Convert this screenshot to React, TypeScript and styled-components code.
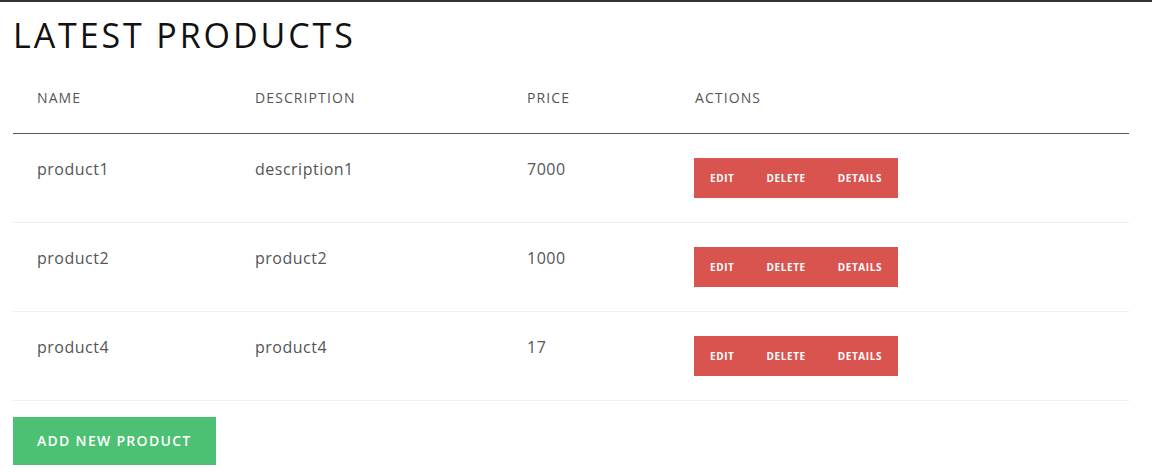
import React from "react";
import styled, { createGlobalStyle } from "styled-components";

const Global = createGlobalStyle`
  html, body { margin: 0; padding: 0; background: #fff; }
  body {
    font-family: "Open Sans", "Noto Sans", sans-serif;
    border-top: 2px solid #333;
  }
`;

const Page = styled.main`
  padding: 0 23px 0 13px;
`;

const Title = styled.h1`
  margin: 13px 0 0 0;
  font-size: 34px;
  font-weight: 400;
  line-height: 1.2;
  letter-spacing: 2.9px;
  color: #111;
  text-transform: uppercase;
`;

const Table = styled.table`
  width: 100%;
  border-collapse: collapse;
  table-layout: fixed;
  margin-top: 5px;
`;

const HeadCell = styled.th<{ $w?: number }>`
  width: ${(p) => (p.$w ? `${p.$w}px` : "auto")};
  padding: 25px 24px 23px;
  text-align: left;
  font-size: 14px;
  font-weight: 400;
  letter-spacing: 1.1px;
  line-height: 24px;
  color: #555;
  text-transform: uppercase;
  border-bottom: 1px solid #555;
`;

const Row = styled.tr`
  border-bottom: 1px solid #eee;
`;

const Cell = styled.td`
  padding: 24px;
  vertical-align: top;
  font-size: 16px;
  line-height: 22px;
  letter-spacing: 0.5px;
  color: #555;
`;

const ActionGroup = styled.div`
  display: flex;
  margin-left: -1px;
`;

const ActionButton = styled.button`
  height: 40px;
  padding: 0 16px;
  border: none;
  background: #d9534f;
  color: #fff;
  font-family: "Open Sans", sans-serif;
  font-size: 10px;
  font-weight: 700;
  letter-spacing: 0.6px;
  text-transform: uppercase;
  cursor: pointer;
`;

const AddButton = styled.button`
  margin-top: 16px;
  height: 48px;
  padding: 0 24px;
  border: none;
  background: #4cc073;
  color: #fff;
  font-family: "Open Sans", sans-serif;
  font-size: 14px;
  font-weight: 600;
  letter-spacing: 1.3px;
  text-transform: uppercase;
  cursor: pointer;
`;

const products = [
  { name: "product1", description: "description1", price: 7000 },
  { name: "product2", description: "product2", price: 1000 },
  { name: "product4", description: "product4", price: 17 },
];

export default function App() {
  return (
    <>
      <Global />
      <Page>
        <Title>Latest Products</Title>
        <Table>
          <thead>
            <tr>
              <HeadCell $w={170}>Name</HeadCell>
              <HeadCell $w={224}>Description</HeadCell>
              <HeadCell $w={120}>Price</HeadCell>
              <HeadCell>Actions</HeadCell>
            </tr>
          </thead>
          <tbody>
            {products.map((p) => (
              <Row key={p.name}>
                <Cell>{p.name}</Cell>
                <Cell>{p.description}</Cell>
                <Cell>{p.price}</Cell>
                <Cell>
                  <ActionGroup>
                    <ActionButton>Edit</ActionButton>
                    <ActionButton>Delete</ActionButton>
                    <ActionButton>Details</ActionButton>
                  </ActionGroup>
                </Cell>
              </Row>
            ))}
          </tbody>
        </Table>
        <AddButton>Add new product</AddButton>
      </Page>
    </>
  );
}
